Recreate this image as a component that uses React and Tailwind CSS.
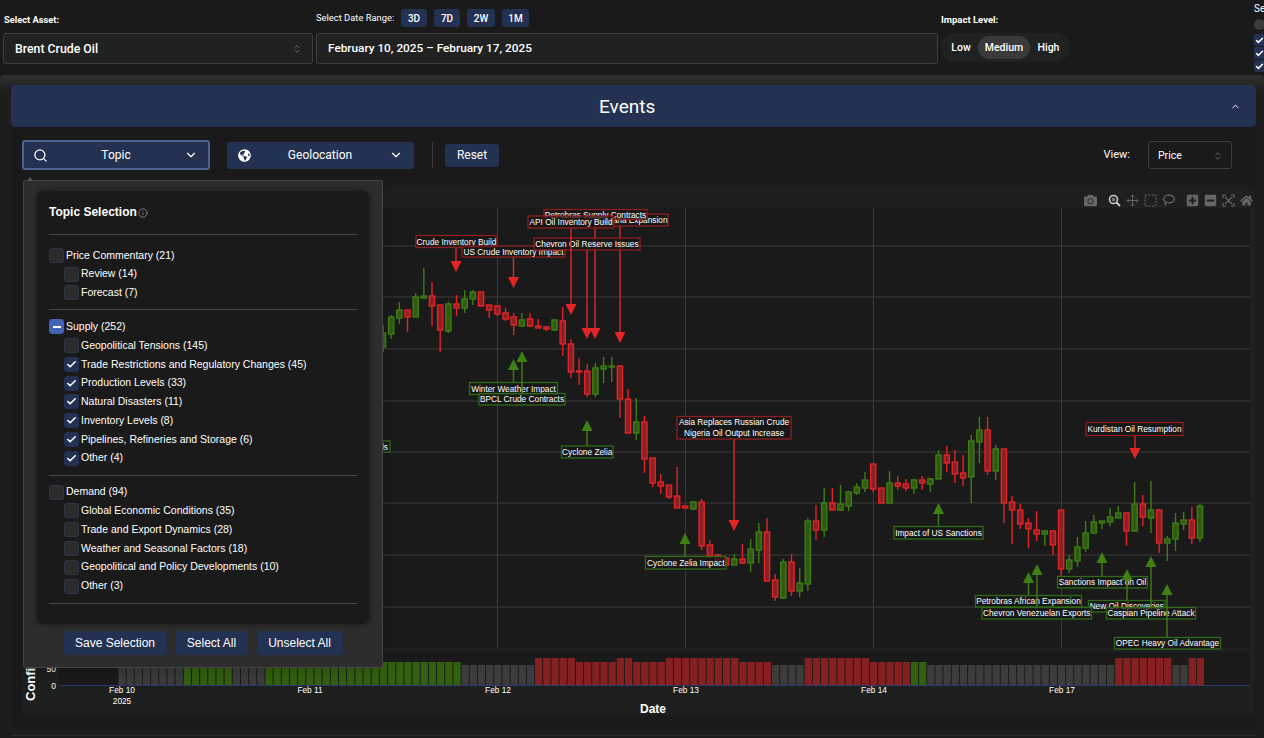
import { Check, ChevronDown, ChevronUp, ChevronsUpDown, Info, Move, Search } from "lucide-react";
import { FaCamera, FaGlobeAmericas, FaHome, FaMinusSquare, FaPlusSquare } from "react-icons/fa";

const CANDLES = [
  ["g",333,347,325,352],["g",317,334,315,339],["g",310,318,302,324],["r",310,317,310,332],["g",297,317,293,317],
  ["g",296,298,268,299],["r",296,306,282,326],["r",305,330,305,352],["g",304,331,302,333],["r",304,308,295,316],
  ["g",299,308,290,313],["g",292,299,290,305],["r",292,306,292,306],["r",305,310,305,318],["r",306,314,306,316],
  ["r",313,319,308,321],["r",317,325,313,335],["g",320,326,313,327],["r",319,326,313,327],["r",326,328,319,329],
  ["r",327,329,326,331],["g",320,330,319,331],["r",321,344,307,356],["r",344,372,339,378],["r",371,372,358,385],
  ["r",371,394,364,397],["g",368,394,363,397],["g",366,369,357,383],["g",366,367,357,382],["r",366,399,366,418],
  ["r",399,433,389,433],["g",422,433,398,440],["r",422,459,416,473],["r",458,483,458,487],["r",482,486,474,494],
  ["r",485,497,485,499],["r",496,508,467,508],["r",506,508,506,508],["g",502,509,501,510],["r",502,546,499,550],
  ["r",545,556,540,558],["r",555,560,554,562],["r",558,565,558,566],["g",559,565,554,565],["r",559,563,544,564],
  ["g",549,563,539,572],["g",532,550,523,563],["r",532,581,518,581],["r",580,597,574,601],["g",562,598,559,599],
  ["r",562,591,554,596],["g",583,591,568,597],["g",521,584,518,591],["r",521,530,505,540],["g",503,530,488,537],
  ["r",503,510,488,510],["g",504,510,485,511],["g",492,506,491,511],["g",487,493,483,495],["g",480,488,472,492],
  ["r",464,489,464,492],["r",488,503,488,503],["g",483,503,471,504],["r",483,486,476,490],["r",484,488,479,491],
  ["g",480,488,479,494],["r",480,483,476,490],["g",479,484,478,492],["g",455,479,450,479],["r",455,463,446,472],
  ["r",462,474,450,483],["r",473,478,455,486],["g",441,477,435,503],["g",430,442,417,463],["r",430,471,417,475],
  ["g",449,471,445,480],["r",449,503,449,523],["r",502,510,496,544],["r",510,524,504,529],["r",523,529,518,548],
  ["r",530,534,511,541],["g",531,534,530,546],["r",531,545,530,555],["r",510,569,510,577],["g",560,569,555,573],
  ["g",547,561,537,567],["g",533,548,521,552],["g",522,533,515,534],["g",521,523,521,529],["g",517,522,508,526],
  ["g",513,518,506,518],["r",513,531,513,546],["g",504,531,482,532],["r",504,517,495,526],["g",510,518,481,533],
  ["r",510,543,509,553],["g",539,543,536,561],["g",523,539,513,551],["g",520,524,512,530],["r",520,538,507,544],
  ["g",506,538,504,542],
];

// x limit, colour, top of the bar
const BAR_SEGMENTS = [
  [183,"#3c3c3c",665],[232,"#33600f",662],[265,"#3c3c3c",665],[460,"#33600f",662],[535,"#3c3c3c",665],
  [575,"#862020",658],[615,"#862020",662],[632,"#862020",658],[665,"#862020",662],[738,"#862020",658],
  [771,"#862020",662],[804,"#3c3c3c",665],[869,"#862020",658],[910,"#862020",662],[926,"#33600f",662],
  [1114,"#3c3c3c",665],[1171,"#862020",658],[1188,"#3c3c3c",665],[1204,"#862020",658],
];

const ANNOTATIONS = [
  { text: ["Crude Inventory Build"], box: [416,235.5,497,247.5], x: 456, tip: 272, up: false, red: true },
  { text: ["US Crude Inventory Impact"], box: [462,246,565,257], x: 513.5, tip: 288, up: false, red: true },
  { text: ["Guyana Expansion"], box: [597,214,668,226], x: 620, tip: 343, up: false, red: true },
  { text: ["Petrobras Supply Contracts"], box: [544,209.5,647,219.5], x: 595, tip: 339, up: false, red: true },
  { text: ["Chevron Oil Reserve Issues"], box: [534,238,640,250], x: 587, tip: 339, up: false, red: true },
  { text: ["API Oil Inventory Build"], box: [528,216,614,228], x: 571, tip: 315, up: false, red: true },
  { text: ["Asia Replaces Russian Crude", "Nigeria Oil Output Increase"], box: [677,416.5,791,439], x: 734, tip: 531, up: false, red: true },
  { text: ["Kurdistan Oil Resumption"], box: [1086,422.5,1183,435.5], x: 1135, tip: 459, up: false, red: true },
  { text: ["Winter Weather Impact"], box: [469.5,382.5,557.5,394.5], x: 513.5, tip: 359, up: true },
  { text: ["BPCL Crude Contracts"], box: [479,393.5,565,405], x: 522, tip: 351, up: true },
  { text: ["Cyclone Zelia"], box: [561.5,446,613,458], x: 587, tip: 420, up: true },
  { text: ["Cyclone Zelia Impact"], box: [645.5,556.5,726,569], x: 685, tip: 533, up: true },
  { text: ["Impact of US Sanctions"], box: [894,526.5,983,539], x: 938.5, tip: 503, up: true },
  { text: ["Sanctions Impact on Oil"], box: [1057.5,576.5,1147.5,588], x: 1102, tip: 552, up: true },
  { text: ["New Oil Discoveries"], box: [1088.5,600.5,1165,612], x: 1127, tip: 569, up: true },
  { text: ["Petrobras African Expansion"], box: [975.5,595.5,1081.5,607], x: 1028.5, tip: 572, up: true },
  { text: ["Chevron Venezuelan Exports"], box: [982,607.5,1091.5,619], x: 1037, tip: 564, up: true },
  { text: ["Caspian Pipeline Attack"], box: [1106.5,607.5,1195.5,619], x: 1151, tip: 556, up: true },
  { text: ["OPEC Heavy Oil Advantage"], box: [1114.5,637.5,1220.5,649], x: 1167, tip: 584, up: true },
];

const TOPIC_GROUPS = [
  {
    label: "Price Commentary (21)",
    items: [["Review (14)"], ["Forecast (7)"]],
  },
  {
    label: "Supply (252)",
    partial: true,
    items: [
      ["Geopolitical Tensions (145)"],
      ["Trade Restrictions and Regulatory Changes (45)", true],
      ["Production Levels (33)", true],
      ["Natural Disasters (11)", true],
      ["Inventory Levels (8)", true],
      ["Pipelines, Refineries and Storage (6)", true],
      ["Other (4)", true],
    ],
  },
  {
    label: "Demand (94)",
    items: [
      ["Global Economic Conditions (35)"],
      ["Trade and Export Dynamics (28)"],
      ["Weather and Seasonal Factors (18)"],
      ["Geopolitical and Policy Developments (10)"],
      ["Other (3)"],
    ],
  },
];

const H_GRID = [246, 297, 349, 401, 452, 503, 555, 607];
const V_GRID = [122, 310, 497.5, 685.5, 873.5, 1061.5];
const DATES = [[122, "Feb 10"], [310, "Feb 11"], [498, "Feb 12"], [686, "Feb 13"], [874, "Feb 14"], [1062, "Feb 17"]];

function Candle({ c, i }) {
  const [color, top, bottom, wickTop, wickBottom] = c;
  const x = 383 + i * 8.17;
  const line = color === "r" ? "#e02427" : "#3f7d14";
  const fill = color === "r" ? "#8c2022" : "#2f5a12";
  return (
    <g>
      <line x1={x} x2={x} y1={wickTop} y2={wickBottom} stroke={line} strokeWidth="1.4" />
      <rect x={x - 2.6} y={top} width="5.2" height={Math.max(bottom - top, 1)} fill={fill} stroke={line} strokeWidth="1.4" />
    </g>
  );
}

function Annotation({ a }) {
  const color = a.red ? "#e32528" : "#3f8012";
  const border = a.red ? "#8f1e20" : "#2f6a14";
  const [x1, y1, x2, y2] = a.box;
  const headBase = a.up ? a.tip + 11 : a.tip - 11;
  const cy = (y1 + y2) / 2;
  return (
    <g>
      <line x1={a.x} x2={a.x} y1={headBase} y2={a.up ? y1 : y2} stroke={color} strokeWidth="1.4" />
      <path d={`M${a.x} ${a.tip}L${a.x - 5.5} ${headBase}H${a.x + 5.5}Z`} fill={color} />
      <rect x={x1} y={y1} width={x2 - x1} height={y2 - y1} fill="#161616" fillOpacity="0.72" stroke={border} strokeWidth="1.3" />
      {a.text.map((t, i) => (
        <text key={t} x={(x1 + x2) / 2} y={cy + 3 + (i - (a.text.length - 1) / 2) * 11} textAnchor="middle" fontSize="8.3" fill="#fff">
          {t}
        </text>
      ))}
    </g>
  );
}

function Chart() {
  return (
    <svg viewBox="23 187 1232 528" className="absolute inset-0 h-full w-full font-['Liberation_Sans',sans-serif]">
      <rect x="59" y="208" width="1191" height="440" fill="#1a1a1a" />
      <rect x="59" y="652" width="1191" height="33" fill="#1a1a1a" />
      {H_GRID.map((y) => (
        <line key={y} x1="59" x2="1250" y1={y} y2={y} stroke="#3a3a3a" />
      ))}
      {V_GRID.map((x) => (
        <line key={x} x1={x} x2={x} y1="208" y2="648" stroke="#3a3a3a" />
      ))}
      {CANDLES.map((c, i) => (
        <Candle key={i} c={c} i={i} />
      ))}
      <rect x="300" y="441" width="90" height="11" fill="#161616" stroke="#2f6a14" strokeWidth="1.3" />
      <text x="388" y="449.5" textAnchor="end" fontSize="8.3" fill="#fff">Strong Fundamentals</text>
      {ANNOTATIONS.map((a) => (
        <Annotation key={a.text[0]} a={a} />
      ))}
      {Array.from({ length: 133 }, (_, k) => {
        const x = 122 + k * 8.17;
        const seg = BAR_SEGMENTS.find((s) => x < s[0]);
        return <rect key={k} x={x - 3.6} y={seg[2]} width="7.2" height={685 - seg[2]} fill={seg[1]} />;
      })}
      <line x1="59" x2="1250" y1="685.5" y2="685.5" stroke="#2a3a6a" />
      <text x="56" y="672" textAnchor="end" fontSize="8.5" fill="#fff">50</text>
      <text x="56" y="689" textAnchor="end" fontSize="8.5" fill="#fff">0</text>
      {DATES.map(([x, d]) => (
        <text key={d} x={x} y="693" textAnchor="middle" fontSize="8.3" fill="#fff">{d}</text>
      ))}
      <text x="122" y="704" textAnchor="middle" fontSize="8.3" fill="#fff">2025</text>
      <text x="653" y="713" textAnchor="middle" fontSize="12" fontWeight="700" fill="#fff">Date</text>
      <text transform="translate(35 701) rotate(-90)" fontSize="13" fontWeight="700" fill="#fff">Confidence</text>
    </svg>
  );
}

function ModeBar() {
  return (
    <div className="absolute right-[2px] top-[6px] flex h-[14px] items-center text-[#666]">
      <FaCamera size={13} className="mr-[11px]" />
      <svg width="13" height="13" viewBox="0 0 13 13" className="mr-[5px] text-[#c8c8c8]" fill="none" stroke="currentColor">
        <circle cx="5.5" cy="5.5" r="4" strokeWidth="1.6" />
        <rect x="3.8" y="3.8" width="3.4" height="3.4" fill="#777" stroke="none" />
        <path d="M8.5 8.5l3.5 3.5" strokeWidth="2" />
      </svg>
      <Move size={13} strokeWidth={1.8} className="mr-[5px]" />
      <svg width="13" height="13" viewBox="0 0 13 13" className="mr-[5px]" fill="none" stroke="currentColor" strokeDasharray="2 1.4">
        <rect x="1" y="1" width="11" height="11" />
      </svg>
      <svg width="13" height="13" viewBox="0 0 13 13" className="mr-[11px]" fill="none" stroke="currentColor" strokeWidth="1.3">
        <ellipse cx="7" cy="5" rx="5.3" ry="3.8" />
        <path d="M3.5 8c-.8 1.2-.6 2.5.6 3.8" />
      </svg>
      <FaPlusSquare size={13} className="mr-[5px]" />
      <FaMinusSquare size={13} className="mr-[5px]" />
      <svg width="13" height="13" viewBox="0 0 13 13" className="mr-[5px]" fill="none" stroke="currentColor" strokeWidth="1.2">
        <path d="M1 4V1h3M9 1h3v3M12 9v3H9M4 12H1V9M3 3l7 7M10 3l-7 7" />
      </svg>
      <FaHome size={13} />
    </div>
  );
}

function CheckBox({ checked, partial }) {
  const look = partial
    ? "bg-[#4263b5] border-[#4263b5]"
    : checked
      ? "bg-[#233152] border-[#233152]"
      : "bg-[#2b2b2b] border-[#2f3648]";
  return (
    <span className={`mr-[2px] flex h-[15px] w-[15px] shrink-0 items-center justify-center rounded-[3px] border ${look}`}>
      {checked && <Check size={11} strokeWidth={3.5} className="text-white" />}
      {partial && <span className="h-[1.5px] w-[8px] bg-white" />}
    </span>
  );
}

function TopicPanel() {
  return (
    <div className="absolute left-[23px] top-[180px] z-10 flex h-[488px] w-[360px] flex-col rounded-[2px] border border-[#454545] bg-[#2d2d2d] px-[13px] pt-[10px] font-['Liberation_Sans',sans-serif] shadow-lg">
      <span className="absolute -top-[4px] left-[3px] h-0 w-0 border-x-[3px] border-b-[4px] border-x-transparent border-b-[#555]" />
      <div className="h-[433px] rounded-[6px] bg-[#1a1a1a] px-[12px] pt-[12px] shadow-[0_0_6px_rgba(0,0,0,0.5)]">
        <div className="mb-[13px] flex h-[18px] items-center text-[12px] font-bold text-white">
          Topic Selection
          <Info size={10} className="ml-[1px] mt-[2px] text-[#8a8a8a]" />
        </div>
        {TOPIC_GROUPS.map((g, i) => (
          <div key={g.label} className={`border-t border-[#454545] pb-[7px] ${i === 0 ? "pt-[11px]" : "pt-[7px]"}`}>
            <div className="flex h-[18.8px] items-center text-[10.5px] text-white">
              <CheckBox partial={g.partial} />
              {g.label}
            </div>
            {g.items.map(([label, checked]) => (
              <div key={label} className="flex h-[18.8px] items-center pl-[15px] text-[10.5px] text-white">
                <CheckBox checked={checked} />
                {label}
              </div>
            ))}
          </div>
        ))}
        <div className="border-t border-[#454545]" />
      </div>
      <div className="mt-[7px] flex justify-center gap-[9px] text-[12px] text-white">
        <button className="h-[24px] w-[103px] rounded-[3px] bg-[#233152]">Save Selection</button>
        <button className="h-[24px] w-[72px] rounded-[3px] bg-[#233152]">Select All</button>
        <button className="h-[24px] w-[86px] rounded-[3px] bg-[#233152]">Unselect All</button>
      </div>
    </div>
  );
}

function RangeButton({ children, className }) {
  return (
    <button className={`flex h-[18px] items-center justify-center rounded-[3px] bg-[#233152] text-[10px] font-medium text-white ${className}`}>
      {children}
    </button>
  );
}

export default function App() {
  return (
    <div className="relative flex h-[738px] w-[1264px] flex-col overflow-hidden bg-[#1a1a1a] font-['Roboto',sans-serif] text-white">
      <header className="flex h-[75px] shrink-0 pl-[3px]">
        <div className="mr-[3px] flex w-[310px] shrink-0 flex-col pt-[14px]">
          <div className="mb-[7px] pl-[1px] text-[9.3px] font-bold leading-[12px]">Select Asset:</div>
          <div className="flex h-[31px] items-center justify-between rounded-[3px] border border-[#3c3e3e] bg-[#1f2221] pl-[11px] pr-[10px] pt-[1px] text-[12.3px] font-medium">
            Brent Crude Oil
            <ChevronsUpDown size={10} className="text-[#777]" />
          </div>
        </div>
        <div className="mr-[3px] flex w-[622px] shrink-0 flex-col pt-[9px]">
          <div className="mb-[6px] flex h-[18px] items-center text-[9.4px]">
            <span className="w-[85px]">Select Date Range:</span>
            <RangeButton className="w-[26px]">3D</RangeButton>
            <RangeButton className="ml-[7px] w-[26px]">7D</RangeButton>
            <RangeButton className="ml-[7px] w-[28px]">2W</RangeButton>
            <RangeButton className="ml-[7px] w-[27px]">1M</RangeButton>
          </div>
          <div className="flex h-[31px] items-center rounded-[3px] border border-[#3c3e3e] bg-[#1f2221] pl-[11px] pt-[1px] text-[11.8px] font-medium">
            February 10, 2025 – February 17, 2025
          </div>
        </div>
        <div className="flex w-[313px] shrink-0 flex-col pt-[14px]">
          <div className="mb-[7px] text-[9.5px] font-bold leading-[12px]">Impact Level:</div>
          <div className="flex h-[29px] w-[129px] items-center rounded-full bg-[#202222] pl-[3px] text-[10.5px] font-medium">
            <span className="w-[34px] text-center">Low</span>
            <span className="flex h-[23px] w-[52px] items-center justify-center rounded-full bg-[#3a3a3a]">Medium</span>
            <span className="w-[37px] text-center">High</span>
          </div>
        </div>
        <div className="flex w-[60px] shrink-0 flex-col pt-[3px]">
          <div className="mb-[4px] text-[10px] leading-[12px]">Select</div>
          <span className="mb-[4px] h-[11px] w-[11px] rounded-full bg-[#3a3a3a]" />
          {[0, 1, 2].map((n) => (
            <span key={n} className="mb-[1px] flex h-[12px] w-[11px] items-center justify-center rounded-[2px] bg-[#233152]">
              <Check size={9} strokeWidth={4} />
            </span>
          ))}
        </div>
      </header>

      <main className="flex-1 rounded-t-[4px] bg-[linear-gradient(#2e2f2f,#1c1c1c_18px)] pl-[11px] pr-[8px] pt-[10px]">
        <div className="flex h-[42px] items-center rounded-[5px] bg-[#233152] pl-[588px] pr-[15px] text-[19px]">
          <span className="flex-1 pt-[2px]">Events</span>
          <ChevronUp size={11} />
        </div>
        <div className="h-[600px] rounded-b-[8px] bg-[#1a1a1a] pl-[12px] pr-[1px]">
          <div className="flex h-[60px] items-center pb-[4px] text-[12px]">
            <button className="-ml-[1px] flex h-[30px] w-[188px] items-center justify-between rounded-[3px] border-2 border-[#4a6491] bg-[#233152] pl-[9px] pr-[10px]">
              <Search size={15} />
              <span>Topic</span>
              <ChevronDown size={14} />
            </button>
            <button className="ml-[17px] flex h-[27px] w-[187px] items-center justify-between rounded-[3px] bg-[#233152] pl-[11px] pr-[11px]">
              <FaGlobeAmericas size={13} />
              <span>Geolocation</span>
              <ChevronDown size={14} />
            </button>
            <span className="ml-[18px] h-[26px] w-px bg-[#3a3a3a]" />
            <button className="ml-[12px] h-[23px] w-[54px] rounded-[3px] bg-[#233152]">Reset</button>
            <span className="ml-auto mr-[18px] text-[11px]">View:</span>
            <div className="mr-[23px] flex h-[28px] w-[84px] items-center justify-between rounded-[3px] border border-[#3c3e3e] pl-[9px] pr-[8px] pt-[1px] text-[10.5px]">
              Price
              <ChevronsUpDown size={10} className="text-[#777]" />
            </div>
          </div>
          <div className="relative h-[528px] bg-[#1e2020]">
            <Chart />
            <ModeBar />
          </div>
        </div>
        <div className="mt-[8px] h-px bg-[#2b2b2b]" />
      </main>
      <TopicPanel />
    </div>
  );
}
